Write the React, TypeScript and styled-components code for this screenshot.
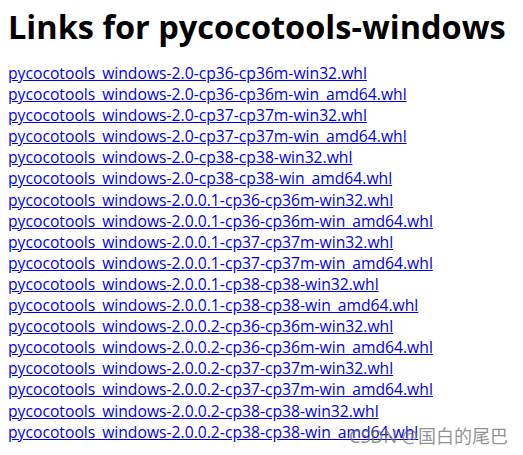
import styled, {createGlobalStyle} from "styled-components";

const GlobalStyle = createGlobalStyle`
  body {
    margin: 8px;
    background: #fff;
    font-family: "Open Sans", "Noto Sans", sans-serif;
  }
`;

const Page = styled.div`
  position: relative;
  height: 439px;
`;

const Title = styled.h1`
  font-size: 32.5px;
  font-weight: 700;
  line-height: 38px;
  margin: 0 0 17px;
  color: #000;
  white-space: nowrap;
`;

const LinkList = styled.div`
  display: flex;
  flex-direction: column;
  align-items: flex-start;
`;

const Link = styled.a`
  font-size: 15.7px;
  line-height: 21.1px;
  color: #0000ee;
  text-decoration: underline;
`;

const Watermark = styled.div`
  position: absolute;
  right: 7px;
  bottom: 0;
  font-size: 18px;
  line-height: 22px;
  color: rgba(110, 110, 110, 0.75);
  font-family: "Noto Sans", "Noto Sans CJK SC", sans-serif;
`;

const files = [
    "2.0-cp36-cp36m-win32",
    "2.0-cp36-cp36m-win_amd64",
    "2.0-cp37-cp37m-win32",
    "2.0-cp37-cp37m-win_amd64",
    "2.0-cp38-cp38-win32",
    "2.0-cp38-cp38-win_amd64",
    "2.0.0.1-cp36-cp36m-win32",
    "2.0.0.1-cp36-cp36m-win_amd64",
    "2.0.0.1-cp37-cp37m-win32",
    "2.0.0.1-cp37-cp37m-win_amd64",
    "2.0.0.1-cp38-cp38-win32",
    "2.0.0.1-cp38-cp38-win_amd64",
    "2.0.0.2-cp36-cp36m-win32",
    "2.0.0.2-cp36-cp36m-win_amd64",
    "2.0.0.2-cp37-cp37m-win32",
    "2.0.0.2-cp37-cp37m-win_amd64",
    "2.0.0.2-cp38-cp38-win32",
    "2.0.0.2-cp38-cp38-win_amd64",
];

const App = () => (
    <Page>
        <GlobalStyle/>
        <Title>Links for pycocotools-windows</Title>
        <LinkList>
            {files.map(f =>
                <Link key={f} href="#">{`pycocotools_windows-${f}.whl`}</Link>
            )}
        </LinkList>
        <Watermark>CSDN @国白的尾巴</Watermark>
    </Page>
);

export default App
